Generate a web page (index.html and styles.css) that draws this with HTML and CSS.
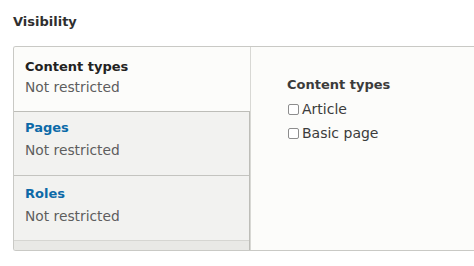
FILE: index.html
```html
<!DOCTYPE html>
<html>
<head>
<meta charset="utf-8">
<link rel="stylesheet" href="styles.css">
</head>
<body>
<div class="page">
  <h2 class="title">Visibility</h2>
  <div class="vtabs">
    <ul class="menu">
      <li class="tab active">
        <div class="tab-title">Content types</div>
        <div class="tab-summary">Not restricted</div>
      </li>
      <li class="tab tab-pages">
        <div class="tab-title link">Pages</div>
        <div class="tab-summary">Not restricted</div>
      </li>
      <li class="tab tab-roles">
        <div class="tab-title link">Roles</div>
        <div class="tab-summary">Not restricted</div>
      </li>
      <li class="filler"></li>
    </ul>
    <div class="pane">
      <div class="pane-label">Content types</div>
      <label class="check"><span class="box"></span>Article</label>
      <label class="check"><span class="box"></span>Basic page</label>
    </div>
  </div>
</div>
</body>
</html>
```
FILE: styles.css
```css
html, body {
  margin: 0;
  padding: 0;
  background: #ffffff;
}
body {
  font-family: "DejaVu Sans", "Liberation Sans", sans-serif;
  font-size: 13px;
  color: #333;
}
.page {
  padding: 13px 0 0 13px;
}
.title {
  margin: 0;
  font-size: 13px;
  font-weight: bold;
  line-height: 18px;
  color: #2f2f2f;
}
.vtabs {
  margin-top: 15px;
  display: flex;
  border: 1px solid #c9c9c5;
  border-right: 0;
  border-radius: 3px 0 0 3px;
  background: #fcfcfa;
  height: 203px;
  overflow: hidden;
}
.menu {
  list-style: none;
  margin: 0;
  padding: 0;
  width: 235px;
  display: flex;
  flex-direction: column;
  background: #f2f2f0;
  border-right: 1px solid #bdbdb8;
  box-shadow: 1px 0 0 #d8d8d4;
}
.tab {
  padding: 9px 12px 13px 11px;
  border-bottom: 1px solid #c4c4c0;
  flex: none;
}
.tab.active {
  background: #fcfcfa;
  margin-right: -1px;
  border-bottom-color: #bdbdb8;
  height: 42px;
}
.tab-title {
  font-weight: bold;
  line-height: 21px;
  color: #222;
}
.tab-title.link {
  color: #0c6aa8;
}
.tab-summary {
  color: #5e5e5e;
  line-height: 21px;
  font-size: 13.8px;
}
.tab-pages {
  padding-top: 5px;
  padding-bottom: 14px;
}
.tab-roles {
  padding-top: 7px;
  padding-bottom: 13px;
  border-bottom-color: #d6d6d2;
}
.tab-pages .tab-title,
.tab-pages .tab-summary,
.tab-roles .tab-title,
.tab-roles .tab-summary {
  line-height: 22px;
}
.filler {
  flex: 1;
  background: #e9e9e6;
}
.pane {
  flex: 1;
  padding: 28px 0 0 37px;
  display: flex;
  flex-direction: column;
}
.pane-label {
  font-weight: bold;
  color: #3b3b3b;
  line-height: 20px;
  margin-bottom: 2px;
}
.check {
  display: flex;
  align-items: center;
  line-height: 24px;
  font-size: 14px;
  color: #3b3b3b;
}
.box {
  width: 9px;
  height: 9px;
  border: 1px solid #8d8d8d;
  border-radius: 2px;
  background: #fff;
  margin: 1px 3px 0 1px;
}
```
